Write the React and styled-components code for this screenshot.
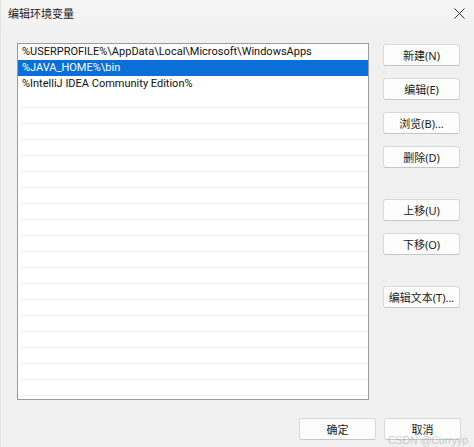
import React from 'react';
import styled, { createGlobalStyle } from 'styled-components';

const GlobalStyle = createGlobalStyle`
  html, body {
    margin: 0;
    padding: 0;
    background: #f0f0f0;
  }
  * {
    box-sizing: border-box;
  }
`;

const DialogWindow = styled.div`
  position: relative;
  width: 474px;
  height: 447px;
  background: #f0f0f0;
  border-left: 1px solid #e2e2e2;
  display: flex;
  flex-direction: column;
  font-family: "Noto Sans", "Noto Sans CJK SC", sans-serif;
  color: #1b1b1b;
  overflow: hidden;
`;

const TitleBar = styled.div`
  height: 26px;
  flex-shrink: 0;
  background: linear-gradient(#f6f6f6, #f2f2f2);
  display: flex;
  align-items: center;
  justify-content: space-between;
  padding: 0 9px 0 7px;
`;

const TitleText = styled.span`
  font-family: "Noto Sans CJK SC", sans-serif;
  font-size: 11px;
  color: #222;
`;

const CloseButton = styled.div`
  width: 12px;
  height: 12px;
  display: flex;
  align-items: center;
  justify-content: center;
`;

const DialogBody = styled.div`
  display: flex;
  padding: 17px 14px 0 16px;
  gap: 14px;
`;

const PathList = styled.div`
  width: 353px;
  height: 357px;
  background: #fff;
  border: 1px solid #9b9b9b;
  display: flex;
  flex-direction: column;
  overflow: hidden;
`;

const PathRow = styled.div`
  height: 16px;
  flex-shrink: 0;
  padding-left: 4px;
  font-family: Roboto, "Noto Sans", sans-serif;
  font-size: 11px;
  line-height: 16px;
  white-space: nowrap;
  background: ${props => (props.selected ? '#0a6fd8' : 'transparent')};
  color: ${props => (props.selected ? '#fff' : '#111')};
  border-bottom: 1px solid ${props => (props.empty ? '#eeeeee' : 'transparent')};
  margin: 0 ${props => (props.empty ? '1px 0 2px' : '0')};
`;

const ButtonColumn = styled.div`
  display: flex;
  flex-direction: column;
  padding-top: 1px;
  width: 77px;
`;

const DialogButton = styled.button`
  width: 77px;
  height: 22px;
  margin-top: ${props => props.gap || 0}px;
  padding: 0;
  background: #fdfdfd;
  border: 1px solid #d9d9d9;
  border-bottom-color: #c6c6c6;
  border-radius: 3px;
  font-family: "Noto Sans", "Noto Sans CJK SC", sans-serif;
  font-size: 11px;
  color: #1b1b1b;
  display: flex;
  align-items: center;
  justify-content: center;
`;

const Footer = styled.div`
  display: flex;
  justify-content: flex-end;
  gap: 8px;
  padding: 18px 13px 0 0;
`;

const Watermark = styled.span`
  position: absolute;
  right: 6px;
  bottom: 1px;
  font-family: "Liberation Sans", sans-serif;
  font-size: 10.5px;
  color: rgba(160, 160, 160, 0.5);
`;

const paths = [
  '%USERPROFILE%\\AppData\\Local\\Microsoft\\WindowsApps',
  '%JAVA_HOME%\\bin',
  '%IntelliJ IDEA Community Edition%',
];

const sideButtons = [
  { label: '新建(N)', gap: 0 },
  { label: '编辑(E)', gap: 12 },
  { label: '浏览(B)...', gap: 12 },
  { label: '删除(D)', gap: 12 },
  { label: '上移(U)', gap: 31 },
  { label: '下移(O)', gap: 12 },
  { label: '编辑文本(T)...', gap: 31 },
];

const App = () => {
  const emptyRows = Array.from({ length: 19 }, (_, i) => i);

  return (
    <>
      <GlobalStyle />
      <DialogWindow>
        <TitleBar>
          <TitleText>编辑环境变量</TitleText>
          <CloseButton>
            <svg width="11" height="11" viewBox="0 0 11 11">
              <path d="M0.5 0.5 L10.5 10.5 M10.5 0.5 L0.5 10.5" stroke="#333" strokeWidth="1" fill="none" />
            </svg>
          </CloseButton>
        </TitleBar>
        <DialogBody>
          <PathList>
            {paths.map((p, i) => (
              <PathRow key={p} selected={i === 1}>{p}</PathRow>
            ))}
            {emptyRows.map(i => (
              <PathRow key={i} empty />
            ))}
          </PathList>
          <ButtonColumn>
            {sideButtons.map(b => (
              <DialogButton key={b.label} gap={b.gap}>{b.label}</DialogButton>
            ))}
          </ButtonColumn>
        </DialogBody>
        <Footer>
          <DialogButton>确定</DialogButton>
          <DialogButton>取消</DialogButton>
        </Footer>
        <Watermark>CSDN @Curryyp</Watermark>
      </DialogWindow>
    </>
  );
};

export default App;
